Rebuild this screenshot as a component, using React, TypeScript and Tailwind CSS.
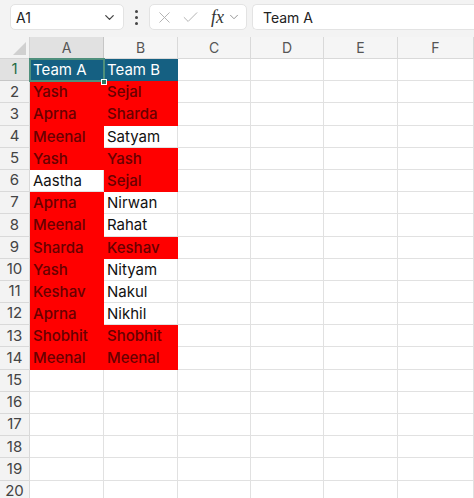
import { X, Check, ChevronDown } from "lucide-react";

const COLS = ["A", "B", "C", "D", "E", "F"];

// [value, red fill]
const TEAM_A: [string, boolean][] = [
  ["Yash", true],
  ["Aprna", true],
  ["Meenal", true],
  ["Yash", true],
  ["Aastha", false],
  ["Aprna", true],
  ["Meenal", true],
  ["Sharda", true],
  ["Yash", true],
  ["Keshav", true],
  ["Aprna", true],
  ["Shobhit", true],
  ["Meenal", true],
];

const TEAM_B: [string, boolean][] = [
  ["Sejal", true],
  ["Sharda", true],
  ["Satyam", false],
  ["Yash", true],
  ["Sejal", true],
  ["Nirwan", false],
  ["Rahat", false],
  ["Keshav", true],
  ["Nityam", false],
  ["Nakul", false],
  ["Nikhil", false],
  ["Shobhit", true],
  ["Meenal", true],
];

function Cell({ value, red }: { value?: string; red?: boolean }) {
  if (red) {
    return (
      <div className="h-[22.2px] bg-[#ff0000] pl-[3px] text-[15px] leading-[22px] font-medium text-[#680000]">
        {value}
      </div>
    );
  }
  return (
    <div className="h-[22.2px] border-r border-b border-[#e1e1e1] bg-white pl-[3px] text-[15px] leading-[22px] text-[#111]">
      {value}
    </div>
  );
}

function Toolbar() {
  return (
    <div className="flex h-[37px] items-start bg-[#f3f3f3] pt-[4px]">
      <div className="ml-[10px] flex h-[26px] w-[114px] items-center justify-between rounded-[5px] border border-[#e3e3e3] bg-white pl-[5px] pr-[6px]">
        <span className="text-[14px] text-[#222]">A1</span>
        <ChevronDown className="h-[15px] w-[15px] text-[#444]" strokeWidth={2} />
      </div>
      <div className="flex h-[26px] w-[25px] flex-col items-center justify-center gap-[3px]">
        <span className="h-[3px] w-[3px] rounded-full bg-[#444]" />
        <span className="h-[3px] w-[3px] rounded-full bg-[#444]" />
        <span className="h-[3px] w-[3px] rounded-full bg-[#444]" />
      </div>
      <div className="flex h-[26px] w-[98px] items-center rounded-[5px] border border-[#e3e3e3] bg-white pl-[5px]">
        <X className="h-[19px] w-[19px] text-[#b0b0b0]" strokeWidth={1.2} />
        <Check className="ml-[7px] h-[19px] w-[19px] text-[#b0b0b0]" strokeWidth={1.2} />
        <span className="ml-[11px] font-['Liberation_Serif',serif] text-[18px] italic text-[#333]">
          fx
        </span>
        <ChevronDown className="ml-[3px] h-[14px] w-[14px] text-[#888]" strokeWidth={1.5} />
      </div>
      <div className="ml-[5px] flex h-[26px] flex-1 items-center rounded-l-[5px] border border-r-0 border-[#e3e3e3] bg-white pl-[10px]">
        <span className="text-[14px] text-[#222]">Team A</span>
      </div>
    </div>
  );
}

export default function App() {
  const rows = Array.from({ length: 20 }, (_, i) => i + 1);

  return (
    <div className="h-[498px] w-[474px] overflow-hidden bg-white font-['Inter',sans-serif]">
      <Toolbar />
      <div className="relative grid grid-cols-[30px_74px_74px_73px_73px_74px_76px]">
        {/* corner */}
        <div className="relative h-[22px] border-r border-b border-[#d4d4d4] bg-[#f3f3f3]">
          <div className="absolute right-[3px] bottom-[3px] h-0 w-0 border-b-[13px] border-l-[13px] border-b-[#d0d0d0] border-l-transparent" />
        </div>
        {COLS.map((c) => (
          <div
            key={c}
            className={`flex h-[22px] items-center justify-center border-r border-b text-[14px] ${
              c === "A"
                ? "border-[#c6c6c6] bg-[#e1e1e1] text-[#555]"
                : "border-[#d9d9d9] bg-[#f5f5f5] text-[#555]"
            }`}
          >
            {c}
          </div>
        ))}

        {rows.map((r) => {
          const rowHead = (
            <div
              key={`h${r}`}
              className={`flex h-[22.2px] items-center justify-center border-r border-b text-[15px] ${
                r === 1
                  ? "border-[#c6c6c6] bg-[#e1e1e1] text-[#1f6b44]"
                  : "border-[#d9d9d9] bg-[#f3f3f3] text-[#444]"
              }`}
            >
              {r}
            </div>
          );
          let a = <Cell key={`a${r}`} />;
          let b = <Cell key={`b${r}`} />;
          if (r === 1) {
            a = (
              <div key="a1" className="h-[22.2px] bg-[#156082] pl-[3px] text-[15px] leading-[22px] text-white">
                Team A
              </div>
            );
            b = (
              <div key="b1" className="h-[22.2px] bg-[#156082] pl-[3px] text-[15px] leading-[22px] text-white">
                Team B
              </div>
            );
          } else if (r <= 14) {
            const [av, ar] = TEAM_A[r - 2];
            const [bv, br] = TEAM_B[r - 2];
            a = <Cell key={`a${r}`} value={av} red={ar} />;
            b = <Cell key={`b${r}`} value={bv} red={br} />;
          }
          return [
            rowHead,
            a,
            b,
            ...COLS.slice(2).map((c) => <Cell key={`${c}${r}`} />),
          ];
        })}

        {/* selection on A1 */}
        <div className="pointer-events-none absolute top-[21px] left-[29px] h-[24px] w-[76px] border-2 border-[#4f8f7c]" />
        <div className="pointer-events-none absolute top-[42px] left-[101px] h-[6px] w-[6px] border border-white bg-[#2b7a63]" />
      </div>
    </div>
  );
}
